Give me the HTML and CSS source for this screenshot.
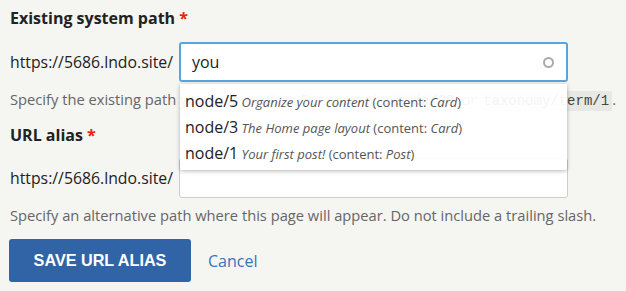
FILE: index.html
```html
<!DOCTYPE html>
<html>
<head>
<meta charset="utf-8">
<link rel="stylesheet" href="styles.css">
</head>
<body>
<form class="form">
  <div class="field">
    <label class="label">Existing system path <span class="req">*</span></label>
    <div class="row">
      <span class="prefix">https://5686.lndo.site/</span>
      <div class="autocomplete">
        <div class="input focus">
          <span class="value">you</span>
          <span class="spinner"></span>
        </div>
        <ul class="menu">
          <li class="item"><span class="path">node/5</span> <em>Organize your content</em> (content: <em>Card</em>)</li>
          <li class="item"><span class="path">node/3</span> <em>The Home page layout</em> (content: <em>Card</em>)</li>
          <li class="item"><span class="path">node/1</span> <em>Your first post!</em> (content: <em>Post</em>)</li>
        </ul>
      </div>
    </div>
    <div class="desc">Specify the existing path you wish to alias. For example: <code>node/28</code> or <code>taxonomy/term/1</code>.</div>
  </div>
  <div class="field second">
    <label class="label">URL alias <span class="req">*</span></label>
    <div class="row">
      <span class="prefix">https://5686.lndo.site/</span>
      <div class="input plain"></div>
    </div>
    <div class="desc">Specify an alternative path where this page will appear. Do not include a trailing slash.</div>
  </div>
  <div class="actions">
    <button type="button" class="btn">SAVE URL ALIAS</button>
    <a class="cancel" href="#">Cancel</a>
  </div>
</form>
</body>
</html>
```
FILE: styles.css
```css
html, body {
  margin: 0;
  padding: 0;
  background: #f5f5f2;
}
body {
  font-family: "Open Sans", sans-serif;
  color: #222;
}
.form {
  padding: 6px 10px 0 10px;
}
.field {
  margin-bottom: 12px;
}
.field.second {
  margin-top: 14px;
}
.label {
  display: block;
  font-weight: 700;
  font-size: 16px;
  line-height: 24px;
  color: #222;
  margin-bottom: 12px;
}
.second .label {
  margin-bottom: 11px;
}
.req {
  color: #e62600;
}
.row {
  display: flex;
  align-items: center;
  gap: 6px;
}
.prefix {
  font-size: 15.8px;
  color: #222;
}
.autocomplete {
  position: relative;
}
.input {
  box-sizing: border-box;
  width: 389px;
  height: 40px;
  background: #fff;
  border: 1px solid #ccc;
  border-radius: 3px;
  display: flex;
  align-items: center;
  padding: 0 12px;
}
.input.focus {
  border: 2px solid #5aa4dd;
  padding: 0 11px;
}
.value {
  flex: 1;
  font-size: 16px;
  color: #222;
}
.spinner {
  width: 7px;
  height: 7px;
  border: 2px solid #aaa;
  border-radius: 50%;
  margin-right: 1px;
}
.desc {
  font-size: 14.7px;
  color: #666;
  margin-top: 7px;
  white-space: nowrap;
}
code {
  font-family: "Liberation Mono", monospace;
  font-size: 14px;
  background: #e8e8e5;
  padding: 2px 3px;
  color: #444;
}
.menu {
  position: absolute;
  left: 1px;
  top: 42px;
  width: 387px;
  margin: 0;
  padding: 4px 0 4px 0;
  list-style: none;
  background: rgba(255, 255, 255, 0.94);
  box-shadow: 0 1px 4px rgba(0, 0, 0, 0.3);
  border-radius: 0 0 3px 3px;
  z-index: 2;
}
.item {
  padding: 0 0 0 5px;
  height: 26px;
  line-height: 26px;
  font-size: 13px;
  color: #555;
  white-space: nowrap;
}
.path {
  font-size: 16px;
  color: #222;
}
.actions {
  display: flex;
  align-items: center;
  gap: 17px;
  margin-top: 14px;
}
.btn {
  box-sizing: border-box;
  width: 182px;
  height: 43px;
  margin-left: -1px;
  background: #3164a7;
  color: #fff;
  border: none;
  border-radius: 3px;
  font-family: "Liberation Sans", Arial, sans-serif;
  font-weight: 700;
  font-size: 16.2px;
  padding: 0;
  cursor: pointer;
}
.cancel {
  color: #3a73b5;
  text-decoration: none;
  font-size: 16px;
}
```
